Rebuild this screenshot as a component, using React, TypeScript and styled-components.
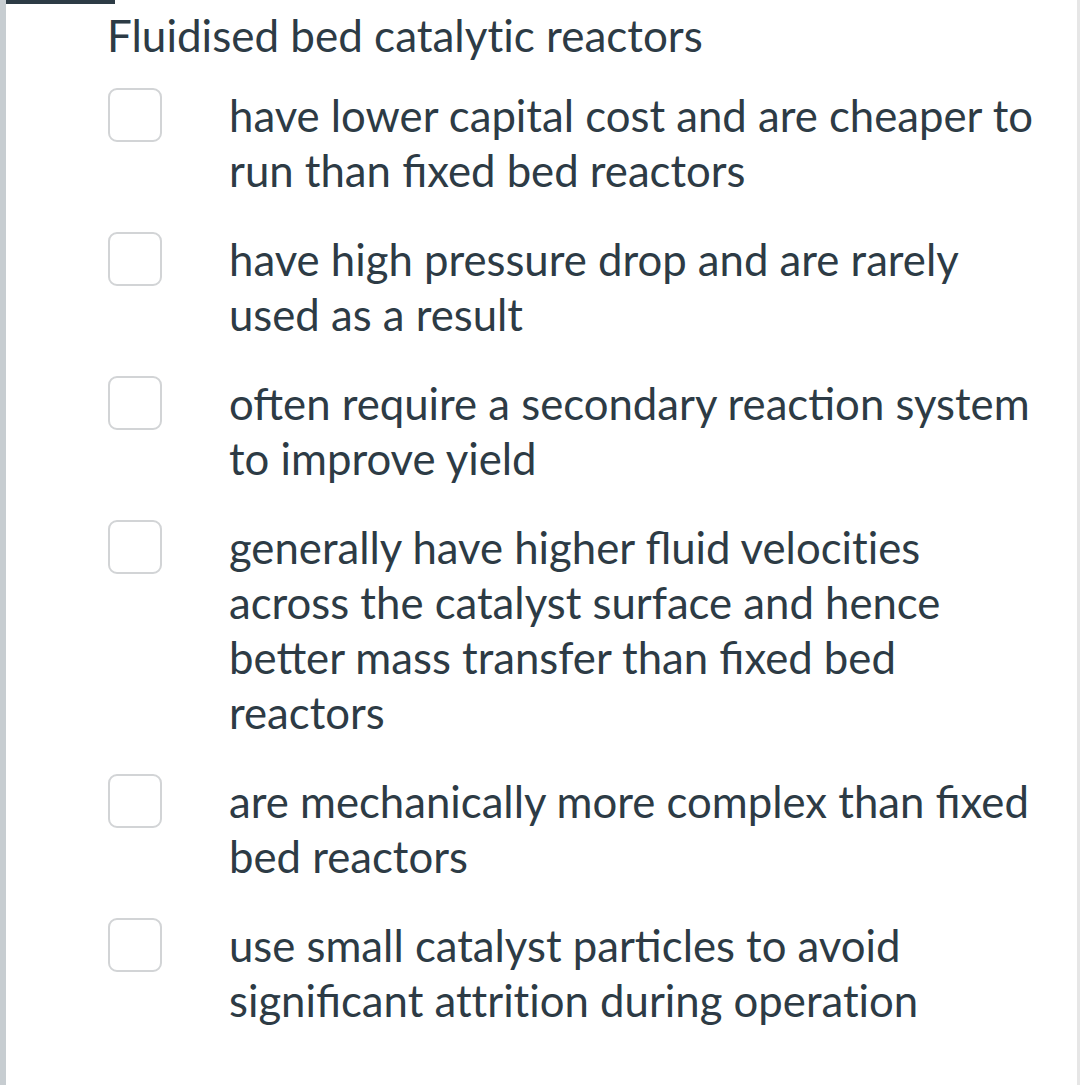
import React from "react";
import styled, { createGlobalStyle } from "styled-components";

const Global = createGlobalStyle`
  html, body { margin: 0; padding: 0; background: #ffffff; }
  body { font-family: Lato, "Noto Sans", sans-serif; }
`;

const Page = styled.div`
  position: relative;
  box-sizing: border-box;
  min-height: 1085px;
  border-left: 6px solid #c7cdd1;
  border-right: 3px solid #e6e6e6;
  padding: 10px 0 0 101px;
  color: #2d3b45;
`;

const TopBar = styled.div`
  position: absolute;
  top: 0;
  left: 0;
  width: 109px;
  height: 4px;
  background: #2d3b45;
`;

const Title = styled.h1`
  margin: 0 0 28px 0;
  font-size: 44px;
  line-height: 50px;
  font-weight: 400;
`;

const List = styled.div`
  display: flex;
  flex-direction: column;
  gap: 34px;
`;

const Option = styled.label`
  display: flex;
  align-items: flex-start;
  gap: 67px;
`;

const Box = styled.span`
  flex: none;
  box-sizing: border-box;
  width: 54px;
  height: 54px;
  margin-left: 1px;
  border: 2px solid #d2d4d6;
  border-radius: 9px;
  background: #fff;
`;

const Text = styled.span`
  font-size: 43.7px;
  line-height: 55px;
  max-width: 820px;
`;

const Z = "\u200C";

const title = `Fluidised bed catalyt${Z}ic reactors`;

const options = [
  "have lower capital cost and are cheaper to run than fixed bed reactors",
  "have high pressure drop and are rarely used as a result",
  "often require a secondary reaction system to improve yield",
  `generally have higher fluid velocit${Z}ies across the catalyst surface and hence better mass transfer than fixed bed reactors`,
  "are mechanically more complex than fixed bed reactors",
  `use small catalyst particles to avoid significant at${Z}trit${Z}ion during operat${Z}ion`,
];

export default function App() {
  return (
    <>
      <Global />
      <Page>
        <TopBar />
        <Title>{title}</Title>
        <List>
          {options.map((o) => (
            <Option key={o}>
              <Box />
              <Text>{o}</Text>
            </Option>
          ))}
        </List>
      </Page>
    </>
  );
}
